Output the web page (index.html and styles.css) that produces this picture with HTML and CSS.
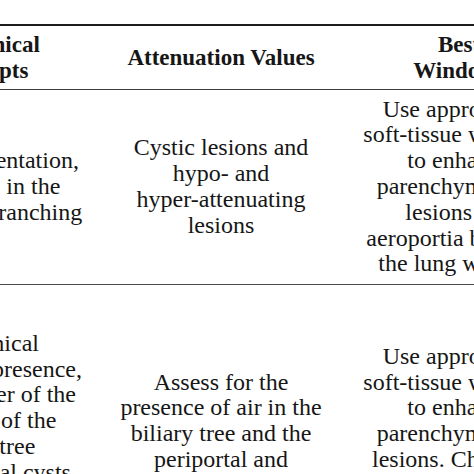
FILE: index.html
```html
<!DOCTYPE html>
<html lang="en">
<head>
<meta charset="utf-8">
<title>CT table</title>
<link rel="stylesheet" href="styles.css">
</head>
<body>
<div class="crop">
<table class="tbl">
  <colgroup>
    <col class="c">
    <col class="c">
    <col class="c">
  </colgroup>
  <thead>
    <tr class="head">
      <th>Anatomical<br>Concepts</th>
      <th>Attenuation Values</th>
      <th>Best<br>Windows</th>
    </tr>
  </thead>
  <tbody>
    <tr class="row1">
      <td>Liver segmentation,<br>variations in the<br>and portal branching</td>
      <td>Cystic lesions and<br>hypo- and<br>hyper-attenuating<br>lesions</td>
      <td>Use appropriate<br>soft-tissue windows<br>to enhance<br>parenchymal and<br>lesions and<br>aeroportia by using<br>the lung window</td>
    </tr>
    <tr class="row2">
      <td>Anatomical<br>absence or presence,<br>and diameter of the<br>branches of the<br>biliary tree<br>or periductal cysts<br>and their relation<br>to the portal<br>vessels</td>
      <td>Assess for the<br>presence of air in the<br>biliary tree and the<br>periportal and<br>peribiliary<br>spaces</td>
      <td>Use appropriate<br>soft-tissue windows<br>to enhance<br>parenchymal and<br>lesions. Check for<br>aerobilia using<br>the lung window<br>settings</td>
    </tr>
  </tbody>
</table>
</div>
</body>
</html>
```

FILE: styles.css
```css
html, body {
  margin: 0;
  padding: 0;
  background: #ffffff;
  overflow: hidden;
}

.crop {
  width: 474px;
  height: 474px;
  overflow: hidden;
  padding-top: 24px;
  box-sizing: border-box;
}

.tbl {
  margin-left: -136px;
  width: 714px;
  table-layout: fixed;
  border-collapse: collapse;
  border-top: 2px solid #1c1c1c;
  font-family: "Liberation Serif", "Times New Roman", serif;
  color: #161616;
}

.c {
  width: 238px;
}

.tbl th,
.tbl td {
  text-align: center;
  vertical-align: middle;
  white-space: nowrap;
  padding: 7px 8px;
  line-height: 25.8px;
}

.tbl th {
  font-size: 23px;
  font-weight: bold;
  padding-top: 6px;
  padding-bottom: 5px;
  border-bottom: 1px solid #3a3a3a;
}

.tbl td {
  font-size: 24px;
  font-weight: normal;
}

.row1 td {
  border-bottom: 1px solid #4a4a4a;
}

.row2 {
  height: 324px;
}
```
